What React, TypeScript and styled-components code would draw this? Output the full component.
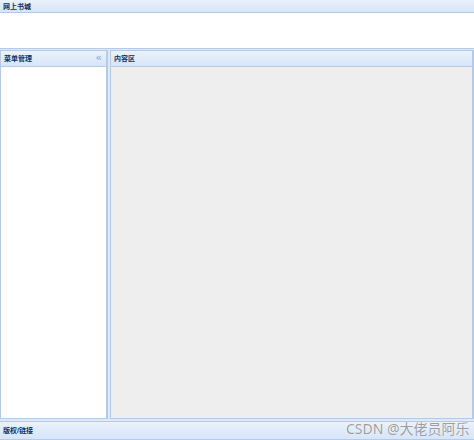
import React from 'react';
import styled, { createGlobalStyle } from 'styled-components';

const GlobalStyle = createGlobalStyle`
	html, body {
		margin: 0;
		padding: 0;
		background: #ffffff;
	}
	body {
		font-family: Tahoma, "Liberation Sans", "Noto Sans CJK SC", sans-serif;
	}
`;

const Viewport = styled.div`
	position: relative;
	display: flex;
	flex-direction: column;
	width: 474px;
	height: 440px;
	overflow: hidden;
	background: #dfe8f6;
`;

const HeaderBar = styled.div<{ $height: number }>`
	display: flex;
	align-items: center;
	justify-content: space-between;
	box-sizing: border-box;
	height: ${(p) => p.$height}px;
	padding: 0 3px;
	background: linear-gradient(#eaf2fc, #d6e5f8);
	border-bottom: 1px solid #b3cbe8;
`;

const Title = styled.span`
	font-size: 7px;
	font-weight: bold;
	color: #102f5f;
	line-height: 1;
	white-space: nowrap;
`;

const North = styled.div`
	display: flex;
	flex-direction: column;
	height: 48px;
	background: #ffffff;
	border-bottom: 1px solid #b3cbe8;
`;

const NorthBody = styled.div`
	flex: 1;
	background: #ffffff;
`;

const Middle = styled.div`
	display: flex;
	flex: 1;
	gap: 2px;
	padding-top: 1px;
	min-height: 0;
`;

const Panel = styled.div<{ $width?: number }>`
	display: flex;
	flex-direction: column;
	box-sizing: border-box;
	${(p) => (p.$width ? `width: ${p.$width}px;` : 'flex: 1;')}
	border: 1px solid #b3cbe8;
	border-right-width: 2px;
	background: #ffffff;
`;

const PanelBody = styled.div<{ $bg: string }>`
	flex: 1;
	background: ${(p) => p.$bg};
`;

const Collapse = styled.span`
	font-family: "DejaVu Sans", sans-serif;
	font-size: 11px;
	line-height: 1;
	color: #86a9da;
	margin-top: -2px;
	margin-right: 1px;
`;

const South = styled.div`
	margin-top: 2px;
	border-top: 1px solid #b3cbe8;
`;

const Watermark = styled.div`
	position: absolute;
	left: 346px;
	top: 418px;
	font-family: "Noto Sans", "Noto Sans CJK SC", sans-serif;
	font-size: 14px;
	color: rgba(140, 140, 140, 0.85);
	text-shadow: 0 0 1px #ffffff;
	white-space: nowrap;
	pointer-events: none;
`;

export default function App() {
	return (
		<>
			<GlobalStyle />
			<Viewport>
				<North>
					<HeaderBar $height={13}>
						<Title>网上书城</Title>
					</HeaderBar>
					<NorthBody />
				</North>
				<Middle>
					<Panel $width={108}>
						<HeaderBar $height={16}>
							<Title>菜单管理</Title>
							<Collapse>«</Collapse>
						</HeaderBar>
						<PanelBody $bg="#ffffff" />
					</Panel>
					<Panel>
						<HeaderBar $height={16}>
							<Title>内容区</Title>
						</HeaderBar>
						<PanelBody $bg="#eeeeee" />
					</Panel>
				</Middle>
				<South>
					<HeaderBar $height={18}>
						<Title>版权/链接</Title>
					</HeaderBar>
				</South>
				<Watermark>CSDN @大佬员阿乐</Watermark>
			</Viewport>
		</>
	);
}
